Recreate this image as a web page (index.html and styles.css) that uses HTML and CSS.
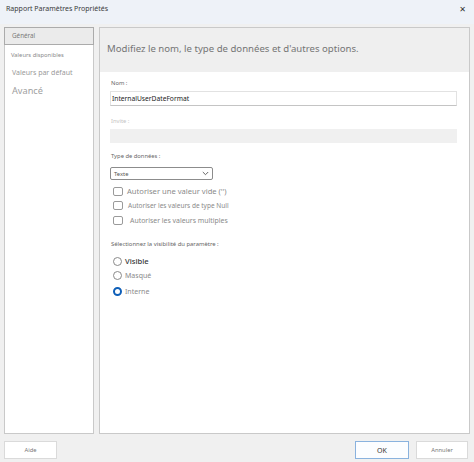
FILE: index.html
```html
<!DOCTYPE html>
<html lang="fr">
<head>
<meta charset="utf-8">
<title>Rapport Paramètres Propriétés</title>
<link rel="stylesheet" href="styles.css">
</head>
<body>
<div class="dialog">
  <div class="titlebar">
    <span class="title">Rapport Paramètres Propriétés</span>
    <span class="close">✕</span>
  </div>
  <div class="main">
    <nav class="sidebar">
      <div class="nav-item selected nav-general">Général</div>
      <div class="nav-item nav-dispo">Valeurs disponibles</div>
      <div class="nav-item nav-defaut">Valeurs par défaut</div>
      <div class="nav-item nav-avance">Avancé</div>
    </nav>
    <section class="content">
      <div class="header">Modifiez le nom, le type de données et d'autres options.</div>
      <div class="form">
        <div class="label label-nom">Nom :</div>
        <div class="input">InternalUserDateFormat</div>
        <div class="label label-invite disabled">Invite :</div>
        <div class="input-disabled"></div>
        <div class="label label-type">Type de données :</div>
        <div class="select">
          <span class="select-text">Texte</span>
          <svg class="chevron" width="7" height="5" viewBox="0 0 7 5"><path d="M0.8 1 L3.5 3.7 L6.2 1" fill="none" stroke="#555" stroke-width="0.9"/></svg>
        </div>
        <div class="check-row row-1"><span class="checkbox"></span><span class="check-text t1">Autoriser une valeur vide ('')</span></div>
        <div class="check-row row-2"><span class="checkbox"></span><span class="check-text t2">Autoriser les valeurs de type Null</span></div>
        <div class="check-row row-3"><span class="checkbox"></span><span class="check-text t3">Autoriser les valeurs multiples</span></div>
        <div class="label label-vis">Sélectionnez la visibilité du paramètre :</div>
        <div class="radio-row r1"><span class="radio"></span><span class="radio-text strong">Visible</span></div>
        <div class="radio-row r2"><span class="radio"></span><span class="radio-text">Masqué</span></div>
        <div class="radio-row r3"><span class="radio checked"></span><span class="radio-text">Interne</span></div>
      </div>
    </section>
  </div>
  <div class="footer">
    <button class="btn btn-help">Aide</button>
    <div class="spacer"></div>
    <button class="btn btn-ok">OK</button>
    <button class="btn btn-cancel">Annuler</button>
  </div>
</div>
</body>
</html>
```
FILE: styles.css
```css
* { box-sizing: border-box; }
html, body { margin: 0; padding: 0; }
body {
  width: 474px;
  height: 462px;
  background: #f0f0f0;
  font-family: "Noto Sans", "Open Sans", "DejaVu Sans", sans-serif;
  color: #444;
  overflow: hidden;
}
.dialog { width: 474px; height: 462px; display: flex; flex-direction: column; }

.titlebar {
  height: 24px;
  background: #eef2f8;
  display: flex;
  align-items: flex-start;
  justify-content: space-between;
  padding: 3px 6px 0 6px;
  flex-shrink: 0;
}
.title { font-size: 7px; line-height: 12px; color: #3a3a3a; }
.close { font-size: 8px; line-height: 12px; color: #333; margin-right: 2px; }

.main {
  display: flex;
  gap: 5px;
  padding: 3px 4px 0 4px;
  height: 410px;
  flex-shrink: 0;
}
.sidebar {
  width: 90px;
  background: #fff;
  border: 1px solid #c9c9c9;
  display: flex;
  flex-direction: column;
}
.nav-item { padding-left: 6px; color: #8a8a8a; white-space: nowrap; }
.nav-general {
  height: 18px;
  line-height: 16px;
  margin: -1px -1px 0 -1px;
  padding-left: 7px;
  background: #ebebeb;
  border: 1px solid #ababab;
  font-size: 6.3px;
  color: #7a7a7a;
}
.nav-dispo { height: 18px; line-height: 20px; font-size: 5.8px; }
.nav-defaut { height: 18px; line-height: 19px; font-size: 7px; padding-left: 7px; color: #999; }
.nav-avance { height: 19px; line-height: 20px; font-size: 9.2px; padding-left: 7px; color: #a0a0a0; }

.content {
  flex: 1;
  background: #fff;
  border: 1px solid #c9c9c9;
  display: flex;
  flex-direction: column;
}
.header {
  height: 44px;
  background: #efefef;
  padding-left: 7px;
  line-height: 41px;
  font-size: 9.6px;
  color: #757575;
  white-space: nowrap;
}
.form {
  display: flex;
  flex-direction: column;
  padding: 0 12px 0 10px;
}
.label { font-size: 5.8px; line-height: 10px; height: 10px; color: #666; padding-left: 1px; white-space: nowrap; }
.label.disabled { color: #c4c4c4; }
.label-nom { margin-top: 6px; }
.input {
  margin-top: 3px;
  height: 15px;
  border: 1px solid #e2e2e2;
  border-bottom: 1px solid #c4c4c4;
  font-size: 6.7px;
  line-height: 13px;
  padding-left: 1px;
  color: #222;
}
.label-invite { margin-top: 10px; }
.input-disabled { margin-top: 3px; height: 14px; background: #f0f0f0; }
.label-type { margin-top: 8px; }
.select {
  margin-top: 6px;
  width: 103px;
  height: 13px;
  border: 1px solid #8c8c8c;
  border-radius: 2px;
  display: flex;
  align-items: center;
  justify-content: space-between;
  padding: 0 3px 0 3px;
}
.select-text { font-size: 5.8px; color: #555; }
.chevron { display: block; }

.check-row { display: flex; align-items: center; height: 14px; padding-left: 3px; }
.row-1 { margin-top: 4px; }
.row-3 { margin-top: 1px; }
.checkbox {
  width: 10px; height: 9px;
  border: 1px solid #9a9a9a;
  border-radius: 2px;
  background: #fff;
  flex-shrink: 0;
}
.check-text { color: #8a8a8a; white-space: nowrap; margin-left: 4px; }
.t1 { font-size: 7.6px; }
.t2 { font-size: 6.5px; margin-left: 5px; }
.t3 { font-size: 6.9px; margin-left: 7px; }

.label-vis { margin-top: 12px; font-size: 5.9px; }
.radio-row { display: flex; align-items: center; height: 15px; padding-left: 3px; }
.r1 { margin-top: 5px; height: 14px; }
.r3 { margin-top: 1px; height: 14px; }
.radio {
  width: 9px; height: 9px;
  border: 1px solid #8a8a8a;
  border-radius: 50%;
  background: #fff;
  flex-shrink: 0;
}
.radio.checked {
  border: 2.5px solid #0f5fb8;
  background: #fff;
}
.radio-text { font-size: 7px; color: #8a8a8a; margin-left: 3px; white-space: nowrap; }
.radio-text.strong { color: #333; font-weight: 500; font-size: 7.6px; }

.footer {
  display: flex;
  align-items: flex-start;
  padding: 7px 6px 0 4px;
  flex: 1;
}
.spacer { flex: 1; }
.btn {
  height: 18px;
  background: #fff;
  border: 1px solid #dadada;
  font-family: inherit;
  font-size: 5.8px;
  color: #777;
  padding: 0;
  margin: 0;
}
.btn-help { width: 53px; }
.btn-ok { width: 54px; border: 1px solid #8ab2de; background: #fcfdff; color: #333; font-size: 7px; margin-right: 7px; }
.btn-cancel { width: 52px; }
```
